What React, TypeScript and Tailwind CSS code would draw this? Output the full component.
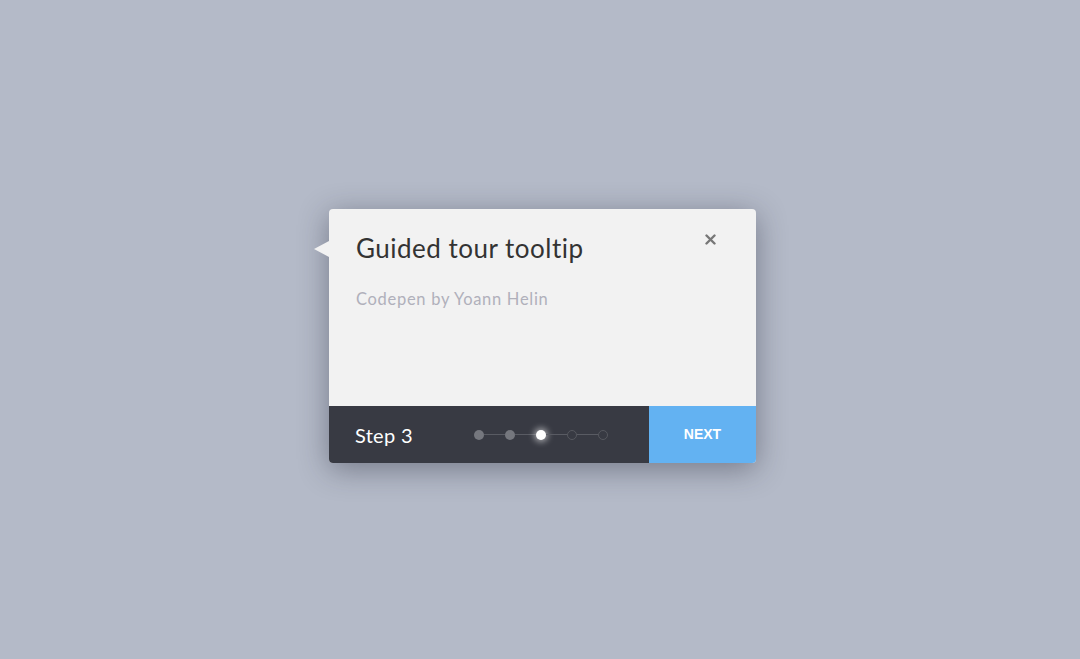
const steps = [
  { state: "done" },
  { state: "done" },
  { state: "active" },
  { state: "todo" },
  { state: "todo" },
] as const;

function StepDots() {
  return (
    <div className="flex items-center">
      {steps.map((s, i) => (
        <div key={i} className="flex items-center">
          {i > 0 && <div className="h-px w-[21px] bg-[#595b63]" />}
          {s.state === "done" && <div className="h-[10px] w-[10px] rounded-full bg-[#75777e]" />}
          {s.state === "active" && (
            <div className="h-[10px] w-[10px] rounded-full bg-white shadow-[0_0_6px_2px_rgba(255,255,255,0.55)]" />
          )}
          {s.state === "todo" && <div className="h-[10px] w-[10px] rounded-full border border-[#56585f]" />}
        </div>
      ))}
    </div>
  );
}

export default function App() {
  return (
    <div className="flex h-[659px] w-full items-center justify-center bg-[#b4bac8] font-['Lato','Noto_Sans',sans-serif]">
      <div className="relative ml-[5px] mt-[13px] w-[427px] rounded-[4px] bg-[#f2f2f2] shadow-[0_6px_30px_rgba(30,34,50,0.42)]">
        {/* pointer toward the highlighted element */}
        <div className="absolute -left-[15px] top-[32px] h-0 w-0 border-y-[8px] border-r-[15px] border-y-transparent border-r-[#f2f2f2]" />

        <div className="relative h-[197px] px-[27px] pt-[24px]">
          <h2 className="text-[26px] leading-[30px] tracking-[0.5px] text-[#333]">Guided tour tooltip</h2>
          <p className="mt-[26px] text-[16.5px] leading-[20px] tracking-[0.7px] text-[#b0b0bb]">Codepen by Yoann Helin</p>
          <button className="absolute right-[40px] top-[25px] text-[#777]" aria-label="Close">
            <svg width="11" height="11" viewBox="0 0 11 11" fill="none" stroke="currentColor" strokeWidth="2.4" strokeLinecap="round">
              <path d="M1.5 1.5l8 8M9.5 1.5l-8 8" />
            </svg>
          </button>
        </div>

        <div className="flex h-[57px] overflow-hidden rounded-b-[4px]">
          <div className="flex flex-1 items-center bg-[#383a43] pl-[26px]">
            <span className="w-[119px] text-[20px] tracking-[0.3px] text-white">Step 3</span>
            <StepDots />
          </div>
          <button className="flex w-[107px] items-center justify-center bg-[#63b2f2] font-['Liberation_Sans',Arial,sans-serif] text-[14px] font-bold text-white">
            NEXT
          </button>
        </div>
      </div>
    </div>
  );
}
